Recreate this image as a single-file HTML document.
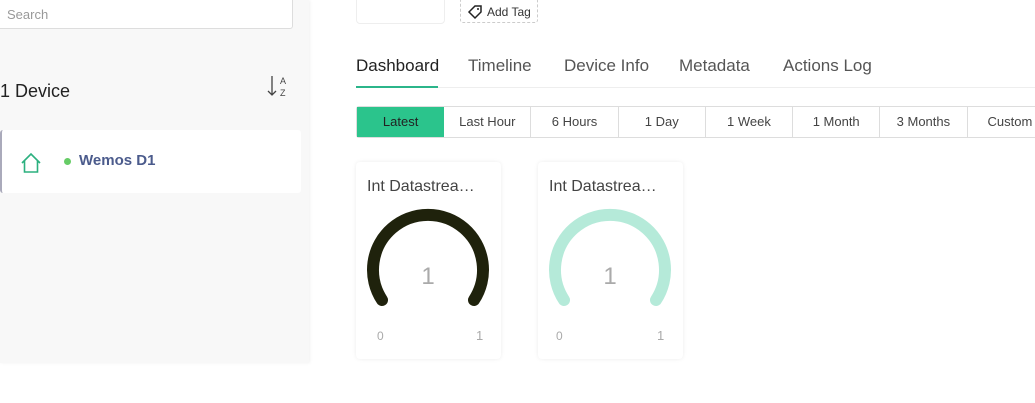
<!DOCTYPE html>
<html><head><style>
*{box-sizing:border-box;margin:0;padding:0}
body{width:1035px;height:403px;background:#fff;font-family:"Liberation Sans",sans-serif;position:relative;overflow:hidden;color:#333}
.side{position:absolute;left:0;top:0;width:309px;height:363px;background:#f8f8f8;box-shadow:1px 0 3px rgba(0,0,0,.06)}
.abs{position:absolute}
.tab{position:absolute;top:56px;font-size:17px;color:#555}
.btns{position:absolute;left:356px;top:106px;height:32px;display:flex;border:1px solid #ddd;border-radius:3px;width:700px}
.btns div{width:88.6px;border-right:1px solid #ddd;font-size:13px;text-align:center;line-height:30px;color:#444}
.card{position:absolute;top:162px;width:145px;height:197px;background:#fff;border-radius:4px;box-shadow:0 0 4px rgba(0,0,0,.08)}
.card .t{position:absolute;left:11px;top:16px;font-size:16px;color:#444}
</style></head><body>
<div class="side">
 <div class="abs" style="left:-4px;top:-4px;width:297px;height:33px;background:#fff;border:1px solid #ddd;border-radius:3px"></div>
 <div class="abs" style="left:7px;top:7px;font-size:13px;color:#999">Search</div>
 <div class="abs" style="left:0;top:81px;font-size:18px;color:#222">1 Device</div>
 <svg class="abs" style="left:266px;top:74px" width="24" height="24"><path d="M6 2V21M2 17L6 21L10 17" stroke="#444" stroke-width="1.3" fill="none"/><text x="14" y="10" font-size="9" fill="#444" font-family="Liberation Sans">A</text><text x="14" y="22" font-size="9" fill="#444" font-family="Liberation Sans">Z</text></svg>
 <div class="abs" style="left:0;top:130px;width:301px;height:63px;background:#fff;border-left:2px solid #aab;border-radius:3px"></div>
 <svg class="abs" style="left:19px;top:151px" width="24" height="24"><path d="M3 12L12 3L21 12M5.5 9.5V21H18.5V9.5" stroke="#2bb07f" stroke-width="1.6" fill="none"/></svg>
 <div class="abs" style="left:64px;top:158px;width:7px;height:7px;border-radius:50%;background:#6c6"></div>
 <div class="abs" style="left:79px;top:152px;font-size:15px;font-weight:bold;color:#4b5b8c">Wemos D1</div>
</div>
<div class="abs" style="left:356px;top:-4px;width:89px;height:28px;border:1px solid #eee;border-radius:4px"></div>
<div class="abs" style="left:460px;top:-2px;width:78px;height:25px;border:1px dashed #ccc;border-radius:3px"></div>
<svg class="abs" style="left:467px;top:4px" width="16" height="16"><path d="M2 8L8 2H14V8L8 14Z" stroke="#222" stroke-width="1.5" fill="none"/><circle cx="11" cy="5" r="1" fill="#222"/></svg>
<div class="abs" style="left:487px;top:5px;font-size:12px;color:#333">Add Tag</div>
<div class="tab" style="left:356px;color:#222">Dashboard</div>
<div class="tab" style="left:468px">Timeline</div>
<div class="tab" style="left:564px">Device Info</div>
<div class="tab" style="left:679px">Metadata</div>
<div class="tab" style="left:783px">Actions Log</div>
<div class="abs" style="left:356px;top:87px;width:679px;height:1px;background:#eee"></div>
<div class="abs" style="left:356px;top:86px;width:82px;height:2px;background:#2bb58a"></div>
<div class="btns">
 <div style="background:#2bc48c;color:#222;border-right:none">Latest</div><div>Last Hour</div><div>6 Hours</div><div>1 Day</div><div>1 Week</div><div>1 Month</div><div>3 Months</div><div style="text-align:left;padding-left:20px">Custom</div>
</div>
<div class="card" style="left:356px"><div class="t">Int Datastrea…</div>
<svg class="abs" style="left:0;top:0" width="145" height="197"><path d="M26 138A55 55 0 1 1 118 138" stroke="#1f220c" stroke-width="12" stroke-linecap="round" fill="none"/>
<text x="72" y="122" font-size="24" fill="#aaa" text-anchor="middle" font-family="Liberation Sans">1</text>
<text x="21" y="178" font-size="12" fill="#aaa" font-family="Liberation Sans">0</text><text x="120" y="178" font-size="13" fill="#aaa" font-family="Liberation Sans">1</text></svg></div>
<div class="card" style="left:538px"><div class="t">Int Datastrea…</div>
<svg class="abs" style="left:0;top:0" width="145" height="197"><path d="M26 138A55 55 0 1 1 118 138" stroke="#b5ead9" stroke-width="12" stroke-linecap="round" fill="none"/>
<text x="72" y="122" font-size="24" fill="#aaa" text-anchor="middle" font-family="Liberation Sans">1</text>
<text x="18" y="178" font-size="12" fill="#aaa" font-family="Liberation Sans">0</text><text x="119" y="178" font-size="13" fill="#aaa" font-family="Liberation Sans">1</text></svg></div>
</body></html>
